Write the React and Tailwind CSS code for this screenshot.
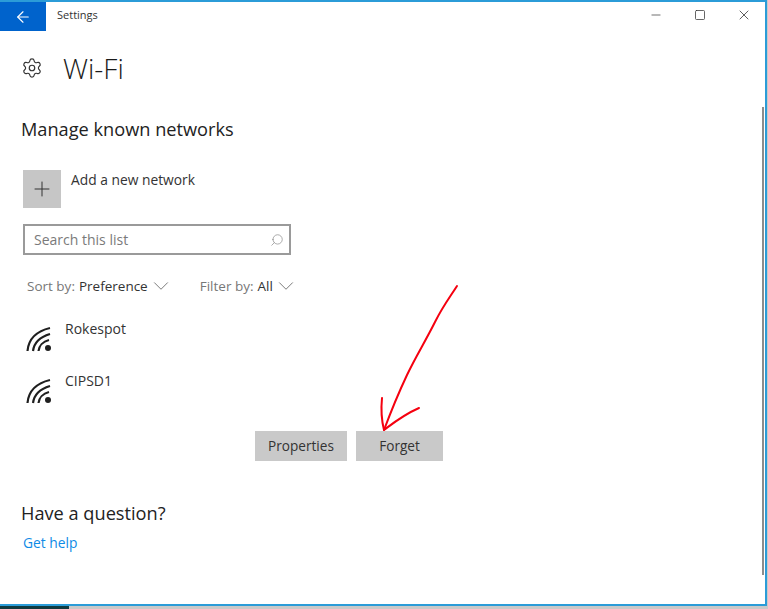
import { ArrowLeft, Plus, Settings, ChevronDown, Search, Minus, Square, X } from "lucide-react";

const font = { fontFamily: '"Open Sans", "Noto Sans", sans-serif' };

function WifiIcon() {
  return (
    <svg width="28" height="28" viewBox="0 0 28 28" fill="none" stroke="#1f1f1f" strokeWidth="2.2" className="shrink-0">
      <path d="M1.5 25 C2.5 13 11 5 24 2" />
      <path d="M7 25 C8 17 14 11 24 8" />
      <path d="M12.5 25 C13 20 17 15.5 23 14" />
      <circle cx="22" cy="22" r="3" fill="#1f1f1f" stroke="none" />
    </svg>
  );
}

function Network({ name }) {
  return (
    <div className="flex h-[52px] items-start">
      <div className="ml-[26px] mt-[2px]">
        <WifiIcon />
      </div>
      <span className="ml-[11px] mt-[-5px] text-[14px] leading-[20px] text-[#333]">{name}</span>
    </div>
  );
}

export default function App() {
  return (
    <div className="relative h-[609px] w-[768px] overflow-hidden bg-[#c9c9c9] text-[#1a1a1a]" style={font}>
      <div className="relative h-[606px] w-[767px] border-t-2 border-r-2 border-b-2 border-[#2b9cd8] bg-white">
        {/* title bar */}
        <div className="flex h-[29px] items-start">
          <div className="flex h-[29px] w-[46px] items-center justify-center bg-[#0063cc]">
            <ArrowLeft size={18} color="#fff" strokeWidth={1.5} />
          </div>
          <span className="ml-[11px] mt-[4px] text-[11px] leading-[18px] text-[#333]">Settings</span>
          <div className="ml-auto mr-[-1px] mt-[5px] flex items-center text-[#333]">
            <div className="flex w-[44px] justify-center"><Minus size={14} strokeWidth={1.2} /></div>
            <div className="flex w-[44px] justify-center"><Square size={12} strokeWidth={1.5} /></div>
            <div className="flex w-[44px] justify-center"><X size={16} strokeWidth={1.2} /></div>
          </div>
        </div>

        {/* header */}
        <div className="ml-[21px] mt-[19px] flex items-center">
          <Settings size={22} strokeWidth={1.3} color="#333" />
          <span className="ml-[20px] text-[28px] font-light leading-[36px]">Wi-Fi</span>
        </div>

        <h2 className="ml-[21px] mt-[30px] text-[18.2px] font-normal leading-[26px] text-[#222]">Manage known networks</h2>

        {/* add network */}
        <div className="ml-[23px] mt-[28px] flex items-start">
          <div className="flex h-[38px] w-[38px] items-center justify-center bg-[#c6c6c6]">
            <Plus size={24} strokeWidth={1} color="#333" />
          </div>
          <span className="ml-[10px] text-[13.8px] leading-[20px] text-[#333]">Add a new network</span>
        </div>

        {/* search */}
        <div className="ml-[23px] mt-[16px] flex h-[31px] w-[268px] items-center justify-between border-2 border-[#9a9a9a] pl-[9px] pr-[5px]">
          <span className="text-[14px] text-[#7a7a7a]">Search this list</span>
          <Search size={14} strokeWidth={1.2} color="#888" className="-scale-x-100" />
        </div>

        {/* sort and filter */}
        <div className="ml-[27px] mt-[20px] flex h-[22px] items-center text-[13.5px] text-[#777]">
          <span>Sort by:</span>
          <span className="ml-[4px] text-[#333]">Preference</span>
          <ChevronDown size={26} strokeWidth={0.9} />
          <span className="ml-[26px]">Filter by:</span>
          <span className="ml-[4px] text-[#333]">All</span>
          <ChevronDown size={26} strokeWidth={0.9} />
        </div>

        {/* networks */}
        <div className="mt-[27px]">
          <Network name="Rokespot" />
          <Network name="CIPSD1" />
        </div>

        {/* actions */}
        <div className="ml-[255px] mt-[3px] flex gap-[9px]">
          <button className="h-[30px] w-[92px] bg-[#c9c9c9] text-[13.6px] text-[#333]">Properties</button>
          <button className="h-[30px] w-[87px] bg-[#c9c9c9] text-[13.6px] text-[#333]">Forget</button>
        </div>

        {/* help */}
        <h2 className="ml-[21px] mt-[39px] text-[18.2px] font-normal leading-[26px] text-[#222]">Have a question?</h2>
        <a className="ml-[23px] mt-[7px] block text-[13.8px] leading-[20px] text-[#0f8be6]">Get help</a>

        {/* scrollbar */}
        <div className="absolute right-[1px] top-[105px] h-[468px] w-[2px] bg-[#8c8c8c]" />
      </div>

      {/* taskbar sliver behind the window */}
      <div className="absolute bottom-0 left-0 h-[3px] w-[69px] bg-[#0f3a40]" />

      {/* red annotation arrow */}
      <svg className="pointer-events-none absolute left-0 top-0" width="768" height="609" fill="none" stroke="#f5000f" strokeWidth="2" strokeLinecap="round" strokeLinejoin="round">
        <path d="M457 286 C450 297 443 306 435 322 C425 342 416 356 407 375 C399 392 390 414 384 430" />
        <path d="M382 398 C381 408 381 418 384 430 C392 424 403 415 419 408" />
      </svg>
    </div>
  );
}
